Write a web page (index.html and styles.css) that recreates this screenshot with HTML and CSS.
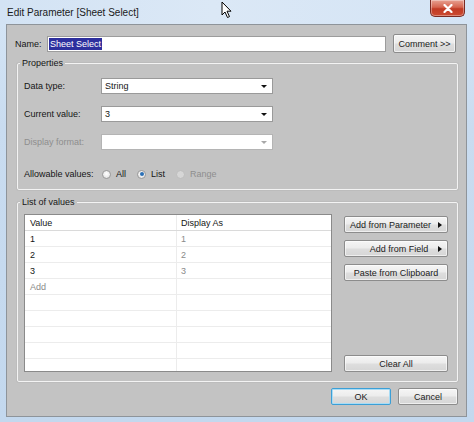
FILE: index.html
```html
<!DOCTYPE html>
<html>
<head>
<meta charset="utf-8">
<link rel="stylesheet" href="styles.css">
</head>
<body>
<div class="window">
  <div class="titlebar">
    <span class="title">Edit Parameter [Sheet Select]</span>
    <svg class="cursor" width="12" height="18" viewBox="0 0 12 18"><path d="M1 1 L1 14 L4 11 L6.5 16.5 L8.5 15.6 L6 10.2 L10 10.2 Z" fill="#fff" stroke="#000" stroke-width="1" stroke-linejoin="round"/></svg>
    <div class="close"><svg width="10" height="9" viewBox="0 0 10 9"><path d="M1.5 1 L8.5 8 M8.5 1 L1.5 8" stroke="#fff" stroke-width="2.2" stroke-linecap="round"/></svg></div>
  </div>
  <div class="client">
    <div class="name-row">
      <span class="name-label">Name:</span>
      <div class="name-input"><span class="sel">Sheet Select</span></div>
      <div class="btn comment">Comment &gt;&gt;</div>
    </div>

    <div class="group props">
      <span class="group-title">Properties</span>
      <div class="field first">
        <span class="flabel">Data type:</span>
        <div class="select"><span>String</span><i class="arrow"></i></div>
      </div>
      <div class="field">
        <span class="flabel">Current value:</span>
        <div class="select"><span>3</span><i class="arrow"></i></div>
      </div>
      <div class="field">
        <span class="flabel disabled">Display format:</span>
        <div class="select off"><span></span><i class="arrow"></i></div>
      </div>
      <div class="field allow">
        <span class="flabel">Allowable values:</span>
        <span class="radio"></span><span class="rlabel">All</span>
        <span class="radio on"></span><span class="rlabel">List</span>
        <span class="radio off"></span><span class="rlabel disabled">Range</span>
      </div>
    </div>

    <div class="group values">
      <span class="group-title">List of values</span>
      <div class="values-body">
        <div class="table">
          <div class="row head"><span class="c1">Value</span><span class="c2">Display As</span></div>
          <div class="row"><span class="c1">1</span><span class="c2 dim">1</span></div>
          <div class="row"><span class="c1">2</span><span class="c2 dim">2</span></div>
          <div class="row"><span class="c1">3</span><span class="c2 dim">3</span></div>
          <div class="row"><span class="c1 dim">Add</span><span class="c2"></span></div>
          <div class="row"><span class="c1"></span><span class="c2"></span></div>
          <div class="row"><span class="c1"></span><span class="c2"></span></div>
          <div class="row"><span class="c1"></span><span class="c2"></span></div>
          <div class="row"><span class="c1"></span><span class="c2"></span></div>
          <div class="row"><span class="c1"></span><span class="c2"></span></div>
        </div>
        <div class="side">
          <div class="btn side-btn"><span>Add from Parameter</span><i class="tri"></i></div>
          <div class="btn side-btn center"><span>Add from Field</span><i class="tri"></i></div>
          <div class="btn side-btn plain">Paste from Clipboard</div>
          <div class="btn side-btn plain clear">Clear All</div>
        </div>
      </div>
    </div>

    <div class="footer">
      <div class="btn foot ok">OK</div>
      <div class="btn foot">Cancel</div>
    </div>
  </div>
</div>
</body>
</html>
```
FILE: styles.css
```css
* { box-sizing: border-box; }
html, body { margin: 0; padding: 0; }
body {
  width: 474px;
  height: 422px;
  overflow: hidden;
  background: #c6dbf0;
  font-family: "Liberation Sans", Arial, sans-serif;
  font-size: 9px;
  color: #151515;
}
.window {
  width: 474px;
  height: 422px;
  display: flex;
  flex-direction: column;
  background: linear-gradient(to bottom, #d6e6f6 0%, #c9dcf0 30%, #c3d8ee 100%);
}
.titlebar {
  height: 24px;
  display: flex;
  align-items: flex-start;
  padding-left: 7px;
  position: relative;
  background: linear-gradient(to right, #d3e3f4 0%, #dbe8f6 45%, #d4e4f5 100%);
}
.title {
  margin-top: 7px;
  font-size: 10px;
  line-height: 12px;
  color: #1a1a1a;
}
.cursor {
  position: absolute;
  left: 221px;
  top: 1px;
}
.close {
  margin-left: auto;
  margin-right: 9px;
  width: 35px;
  height: 17px;
  border: 1px solid #7a2a22;
  border-top: none;
  border-radius: 0 0 5px 5px;
  background: linear-gradient(to bottom, #e8a192 0%, #d6654f 45%, #c13a24 55%, #cc4b31 100%);
  display: flex;
  align-items: center;
  justify-content: center;
  box-shadow: inset 0 0 0 1px rgba(255,255,255,0.35);
}
.client {
  margin: 0 7px 0 6px;
  height: 393px;
  border: 1px solid #8e949a;
  background: #c3c3c3;
  display: flex;
  flex-direction: column;
}
.name-row {
  margin-top: 9px;
  padding-left: 8px;
  height: 19px;
  display: flex;
  align-items: center;
}
.name-label {
  width: 32px;
}
.name-input {
  width: 339px;
  height: 16px;
  background: #fff;
  border: 1px solid #9c9c9c;
  padding-left: 1px;
  display: flex;
  align-items: center;
}
.sel {
  background: #2d2f9e;
  color: #fff;
  line-height: 12px;
  padding: 0 1px;
}
.btn {
  background: linear-gradient(to bottom, #f5f5f5 0%, #ececec 48%, #dedede 52%, #d6d6d6 100%);
  border: 1px solid #8c8c8c;
  border-radius: 2px;
  display: flex;
  align-items: center;
  justify-content: center;
  color: #1b1b1b;
  box-shadow: inset 0 0 0 1px rgba(255,255,255,0.6);
}
.comment {
  margin-left: 7px;
  width: 63px;
  height: 19px;
}
.group {
  margin-left: 10px;
  width: 441px;
  border: 1px solid #f3f3f3;
  border-radius: 2px;
  display: flex;
  flex-direction: column;
  box-shadow: 0 0 0 1px #bcbcbc;
}
.group-title {
  margin: -6px 0 0 2px;
  padding: 0 2px;
  line-height: 11px;
  height: 11px;
  background: #c3c3c3;
  align-self: flex-start;
}
.props {
  margin-top: 10px;
  height: 127px;
}
.field {
  display: flex;
  align-items: center;
  height: 16px;
  margin-top: 12px;
  padding-left: 6px;
}
.field.first { margin-top: 9px; }
.field.allow { margin-top: 16px; }
.flabel {
  width: 77px;
}
.disabled { color: #8e8e8e; }
.select {
  width: 172px;
  height: 16px;
  background: #fff;
  border: 1px solid #9a9a9a;
  display: flex;
  align-items: center;
  padding-left: 3px;
}
.select span { flex: 1; }
.arrow {
  width: 0;
  height: 0;
  border-left: 3px solid transparent;
  border-right: 3px solid transparent;
  border-top: 3px solid #111;
  margin-right: 5px;
}
.select.off { border-color: #b4b4b4; }
.select.off .arrow { border-top-color: #a8a8a8; }
.radio {
  width: 9px;
  height: 9px;
  border-radius: 50%;
  border: 1px solid #9a9a9a;
  background: radial-gradient(circle at 50% 40%, #ffffff 0%, #e6e6e6 70%, #d2d2d2 100%);
  margin-left: 1px;
  display: flex;
  align-items: center;
  justify-content: center;
}
.radio.on::after {
  content: "";
  width: 4px;
  height: 4px;
  border-radius: 50%;
  background: #2a6fb5;
}
.radio.off { border-color: #bdbdbd; background: #d6d6d6; }
.rlabel {
  margin-left: 5px;
  margin-right: 10px;
}
.values {
  margin-top: 12px;
  height: 180px;
}
.values-body {
  display: flex;
  margin-top: 6px;
  padding-left: 6px;
}
.table {
  width: 308px;
  height: 158px;
  background: #fff;
  border: 1px solid #8a8a8a;
  overflow: hidden;
  display: flex;
  flex-direction: column;
}
.row {
  display: flex;
  height: 16px;
  flex-shrink: 0;
  border-bottom: 1px solid #ececec;
}
.row.head { border-bottom-color: #dadada; }
.row span {
  padding-top: 2px;
  line-height: 13px;
  height: 15px;
}
.c1 {
  width: 152px;
  padding-left: 5px;
  border-right: 1px solid #ececec;
}
.c2 {
  flex: 1;
  padding-left: 4px;
}
.dim { color: #8a8a8a; }
.side {
  margin-left: 12px;
  width: 104px;
  padding-top: 2px;
  display: flex;
  flex-direction: column;
  gap: 7px;
}
.side-btn {
  height: 17px;
  justify-content: space-between;
  padding: 0 5px 0 5px;
}
.side-btn.center span { flex: 1; text-align: center; padding-left: 10px; }
.side-btn.plain { justify-content: center; }
.side-btn.clear { margin-top: auto; }
.tri {
  width: 0;
  height: 0;
  border-top: 3px solid transparent;
  border-bottom: 3px solid transparent;
  border-left: 4px solid #111;
}
.footer {
  display: flex;
  justify-content: flex-end;
  gap: 7px;
  margin-top: 6px;
  padding-right: 8px;
}
.foot {
  width: 60px;
  height: 17px;
}
.ok {
  border-color: #3c9fd6;
  box-shadow: inset 0 0 0 1px #a9dcf5;
}
```
